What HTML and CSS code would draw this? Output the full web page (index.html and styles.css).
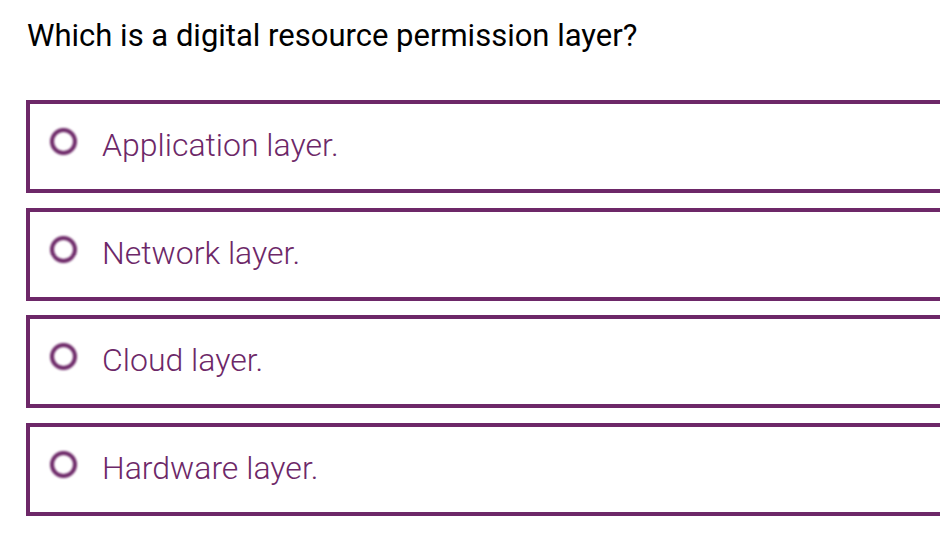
FILE: index.html
```html
<!DOCTYPE html>
<html>
<head>
<meta charset="utf-8">
<link rel="stylesheet" href="styles.css">
</head>
<body>
<div class="quiz">
  <h1 class="question">Which is a digital resource permission layer?</h1>
  <div class="options">
    <label class="option"><span class="radio"></span><span class="label">Application layer.</span></label>
    <label class="option"><span class="radio"></span><span class="label">Network layer.</span></label>
    <label class="option"><span class="radio"></span><span class="label">Cloud layer.</span></label>
    <label class="option"><span class="radio"></span><span class="label">Hardware layer.</span></label>
  </div>
</div>
</body>
</html>
```
FILE: styles.css
```css
html, body {
  margin: 0;
  padding: 0;
  background: #ffffff;
  overflow: hidden;
}
.quiz {
  padding: 13px 0 0 26px;
  font-family: Roboto, "Liberation Sans", sans-serif;
}
.question {
  margin: 0;
  font-size: 31px;
  font-weight: 400;
  line-height: 46px;
  color: #000000;
  padding-left: 1px;
}
.options {
  margin-top: 41px;
  display: flex;
  flex-direction: column;
  gap: 14.5px;
}
.option {
  display: flex;
  align-items: flex-start;
  height: 85px;
  border: 4px solid #6d2868;
  border-right: none;
  box-sizing: content-box;
}
.radio {
  width: 19px;
  height: 19px;
  border: 4.5px solid #6d2868;
  border-radius: 50%;
  margin-left: 20px;
  margin-top: 24px;
  flex: none;
  filter: blur(0.8px);
}
.label {
  margin-left: 25px;
  margin-top: 21px;
  font-size: 32px;
  font-weight: 300;
  color: #6d2868;
  line-height: 40px;
}
```
